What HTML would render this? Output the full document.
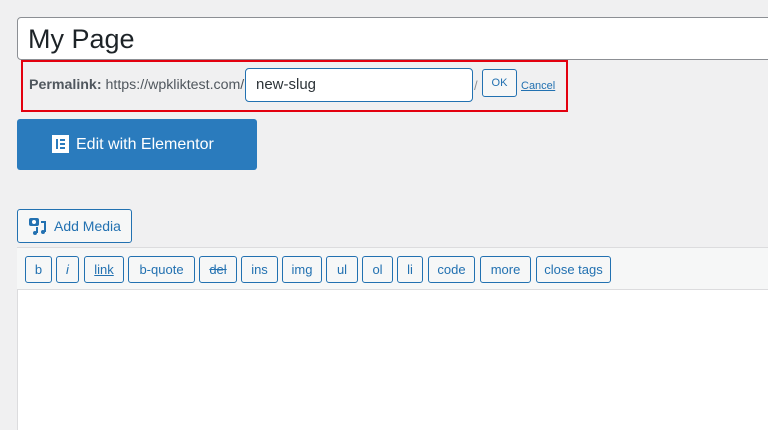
<!DOCTYPE html>
<html><head><style>
body{margin:0;width:768px;height:426px;background:#f0f0f1;position:relative;overflow:hidden;font-family:"Liberation Sans",sans-serif}
.a{position:absolute;box-sizing:border-box}
.tb{position:absolute;top:256px;height:27px;border:1px solid #2271b1;border-radius:3px;background:#f6f7f7;color:#2271b1;font-size:13px;line-height:25px;text-align:center;box-sizing:border-box}
</style></head><body>
<div class="a" style="left:17px;top:17px;width:760px;height:43px;background:#fff;border:1px solid #8c8f94;border-radius:4px;font-size:27px;color:#1d2327;padding:6px 0 0 10px">My Page</div>
<div class="a" style="left:21px;top:60px;width:547px;height:52px;border:2px solid #e3000f"></div>
<div class="a" style="left:29px;top:77px;font-size:14.2px;color:#50575e;white-space:nowrap"><b>Permalink:</b> https://wpkliktest.com/</div>
<div class="a" style="left:245px;top:68px;width:228px;height:34px;background:#fff;border:1.5px solid #2271b1;border-radius:4px;font-size:15px;color:#2c3338;padding:7px 0 0 10px">new-slug</div>
<div class="a" style="left:474px;top:78px;font-size:13px;color:#8c8f94">/</div>
<div class="a" style="left:482px;top:69px;width:35px;height:28px;border:1px solid #2271b1;border-radius:3px;background:#f6f7f7;color:#2271b1;font-size:11px;text-align:center;line-height:26px">OK</div>
<div class="a" style="left:521px;top:80px;font-size:11px;color:#2271b1;text-decoration:underline">Cancel</div>
<div class="a" style="left:17px;top:119px;width:240px;height:51px;background:#2a7bbd;border-radius:3px;color:#fff;font-size:16px;line-height:51px;padding-left:59px">Edit with Elementor</div>
<div class="a" style="left:52px;top:135px;width:17px;height:18px;background:#fff"><div style="position:absolute;left:4px;top:4px;width:2px;height:10px;background:#2a7bbd"></div><div style="position:absolute;left:8px;top:4px;width:5px;height:2px;background:#2a7bbd"></div><div style="position:absolute;left:8px;top:8px;width:5px;height:2px;background:#2a7bbd"></div><div style="position:absolute;left:8px;top:12px;width:5px;height:2px;background:#2a7bbd"></div></div>
<div class="a" style="left:17px;top:209px;width:115px;height:34px;border:1px solid #2271b1;border-radius:3px;background:#f6f7f7;color:#2271b1;font-size:14px;line-height:32px;padding-left:36px">Add Media</div>
<svg class="a" style="left:28px;top:216px" width="20" height="20" viewBox="0 0 20 20"><rect x="1" y="2" width="10" height="8" rx="2" fill="#2271b1"/><circle cx="6" cy="6" r="2" fill="#fff"/><path d="M13 6h4v10" stroke="#2271b1" stroke-width="2" fill="none"/><circle cx="15" cy="16" r="2" fill="#2271b1"/><path d="M9 11v6" stroke="#2271b1" stroke-width="2"/><circle cx="7" cy="17" r="2" fill="#2271b1"/></svg>
<div class="a" style="left:17px;top:247px;width:760px;height:43px;background:#f6f7f7;border-top:1px solid #dcdcde;border-bottom:1px solid #dcdcde"></div>
<div class="a" style="left:17px;top:290px;width:760px;height:140px;background:#fff;border-left:1px solid #dcdcde"></div>
<div class="tb" style="left:25px;width:27px">b</div>
<div class="tb" style="left:56px;width:23px;font-style:italic">i</div>
<div class="tb" style="left:84px;width:40px;text-decoration:underline">link</div>
<div class="tb" style="left:128px;width:67px">b-quote</div>
<div class="tb" style="left:199px;width:38px;text-decoration:line-through">del</div>
<div class="tb" style="left:241px;width:37px">ins</div>
<div class="tb" style="left:282px;width:40px">img</div>
<div class="tb" style="left:326px;width:32px">ul</div>
<div class="tb" style="left:362px;width:31px">ol</div>
<div class="tb" style="left:397px;width:26px">li</div>
<div class="tb" style="left:428px;width:47px">code</div>
<div class="tb" style="left:480px;width:51px">more</div>
<div class="tb" style="left:536px;width:75px">close tags</div>
</body></html>
